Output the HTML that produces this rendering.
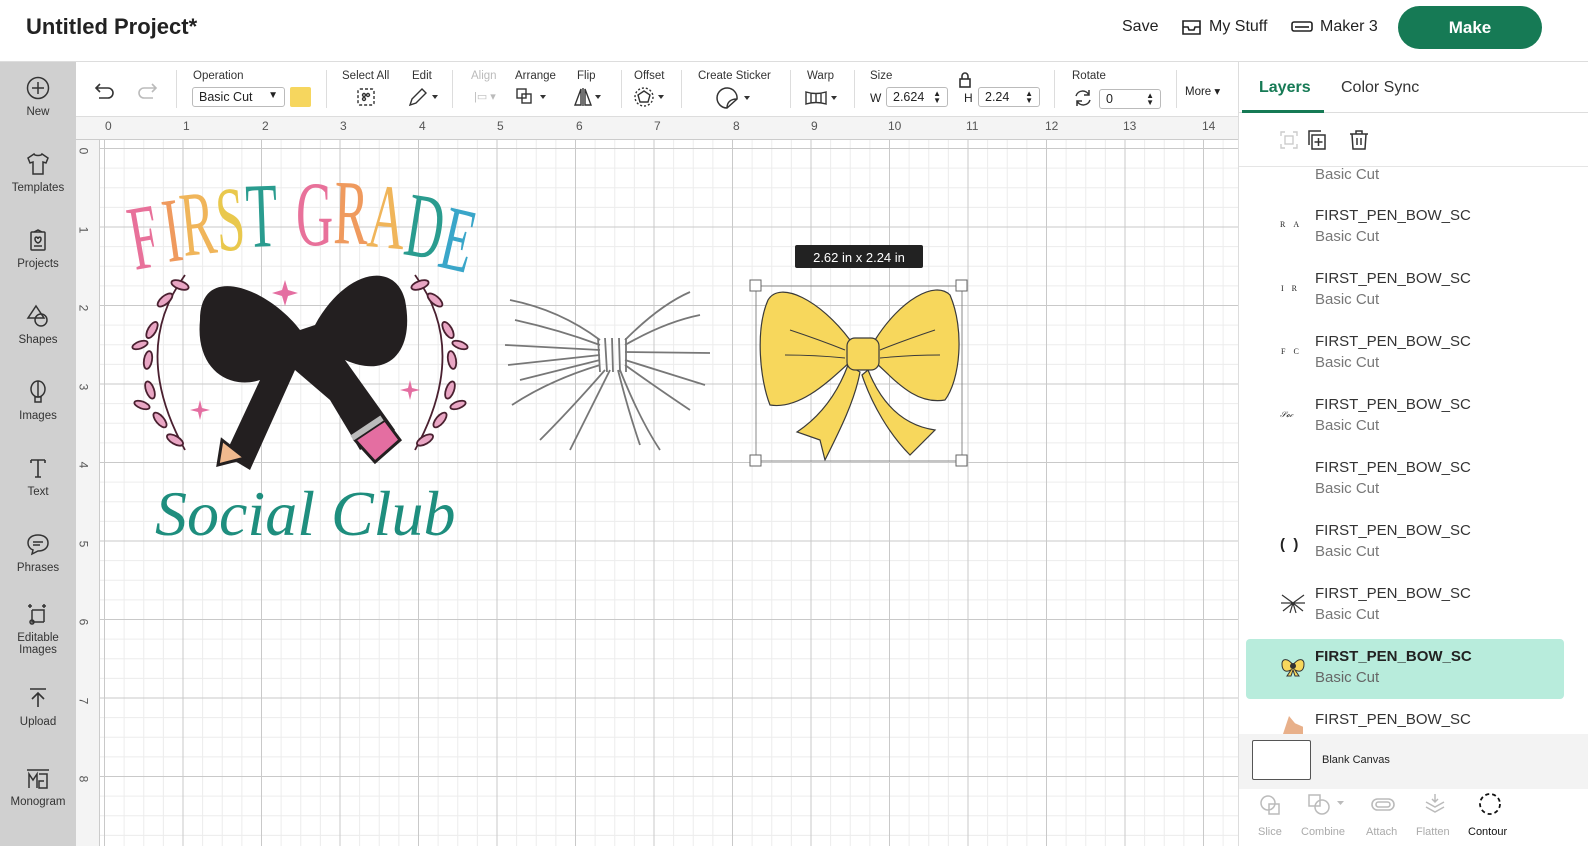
<!DOCTYPE html>
<html><head><meta charset="utf-8"><style>
*{margin:0;padding:0;box-sizing:border-box}
body{width:1588px;height:846px;overflow:hidden;font-family:"Liberation Sans",sans-serif;background:#fff;position:relative;color:#222}
.top{position:absolute;left:0;top:0;width:1588px;height:62px;background:#fff;border-bottom:1px solid #ddd}
.title{position:absolute;left:26px;top:14px;font-size:22px;font-weight:bold;color:#222}
.tr{position:absolute;top:18px;font-size:16px;color:#222}
.make{position:absolute;left:1398px;top:6px;width:144px;height:43px;border-radius:22px;background:#167a55;color:#fff;font-weight:bold;font-size:17px;text-align:center;line-height:43px}
.side{position:absolute;left:0;top:62px;width:76px;height:784px;background:#d0d0d0}
.si{position:absolute;left:0;width:76px;text-align:center;font-size:11.5px;color:#333}
.si svg{display:block;margin:0 auto 6px}
.tb{position:absolute;left:76px;top:62px;width:1162px;height:55px;background:#fff;border-bottom:1px solid #ddd}
.lab{position:absolute;top:8px;font-size:11.5px;color:#333}
.sep{position:absolute;top:8px;width:1px;height:38px;background:#ddd}
.inp{position:absolute;height:20px;border:1px solid #bbb;border-radius:3px;font-size:12.5px;padding:2px 6px;background:#fff}
.canvas{position:absolute;left:100px;top:140px;width:1138px;height:706px;background-color:#fff;
background-image:linear-gradient(to right,#c9c9c9 1px,transparent 1px),linear-gradient(to bottom,#c9c9c9 1px,transparent 1px),linear-gradient(to right,#ececec 1px,transparent 1px),linear-gradient(to bottom,#ececec 1px,transparent 1px);
background-size:78.5px 78.5px,78.5px 78.5px,19.625px 19.625px,19.625px 19.625px;background-position:4px 8px,4px 8px,4px 8px,4px 8px}
.rt{position:absolute;left:76px;top:117px;width:1162px;height:23px;background:#f4f4f4;border-bottom:1px solid #ccc}
.rl{position:absolute;left:76px;top:140px;width:24px;height:706px;background:#f4f4f4;border-right:1px solid #ccc}
.rt span{position:absolute;top:2px;font-size:12px;color:#555}
.rl span{position:absolute;left:4px;font-size:12px;color:#555;transform:rotate(90deg)}
.panel{position:absolute;left:1238px;top:62px;width:350px;height:784px;background:#fff;border-left:1px solid #ddd}
.ly{position:absolute;left:1315px;font-size:15px;color:#333}
.ly b{font-weight:normal;display:block}
.ly i{font-style:normal;color:#777;display:block;margin-top:4px}
.bt{position:absolute;top:826px;font-size:11px;color:#aaa}
</style></head><body>
<div class="top">
<div class="title">Untitled Project*</div>
<div class="tr" style="left:1122px">Save</div>
<svg style="position:absolute;left:1181px;top:18px" width="21" height="18" viewBox="0 0 21 18" fill="none" stroke="#222" stroke-width="1.6"><path d="M2 3h17v13H2z M2 9h5l1 3h5l1-3h5"/></svg>
<div class="tr" style="left:1209px">My Stuff</div>
<svg style="position:absolute;left:1291px;top:20px" width="22" height="14" viewBox="0 0 22 14" fill="none" stroke="#222" stroke-width="1.6"><rect x="1" y="2" width="20" height="9" rx="2"/><path d="M4 7h14"/></svg>
<div class="tr" style="left:1320px">Maker 3</div>
<div class="make">Make</div>
</div>

<div class="side">
<div class="si" style="top:14px"><svg width="24" height="24" viewBox="0 0 24 24" fill="none" stroke="#333" stroke-width="1.5"><circle cx="12" cy="12" r="10.5"/><path d="M12 6v12M6 12h12"/></svg>New</div>
<div class="si" style="top:90px"><svg width="24" height="24" viewBox="0 0 24 24" fill="none" stroke="#333" stroke-width="1.5"><path d="M8 2l-6 4 2 5 3-1v12h10V10l3 1 2-5-6-4c-1 2-7 2-8 0z"/></svg>Templates</div>
<div class="si" style="top:166px"><svg width="24" height="24" viewBox="0 0 24 24" fill="none" stroke="#333" stroke-width="1.5"><rect x="5" y="4" width="14" height="18" rx="1"/><path d="M8 4l4-2 4 2M9 11c0-3 3-2 3 0 0-2 3-3 3 0s-3 4-3 4-3-1-3-4M8 18h8"/></svg>Projects</div>
<div class="si" style="top:242px"><svg width="24" height="24" viewBox="0 0 24 24" fill="none" stroke="#333" stroke-width="1.5"><path d="M10 2l8 12H2z"/><circle cx="15" cy="16" r="6"/></svg>Shapes</div>
<div class="si" style="top:318px"><svg width="24" height="24" viewBox="0 0 24 24" fill="none" stroke="#333" stroke-width="1.5"><ellipse cx="12" cy="9" rx="7" ry="8"/><path d="M12 1v16M9 17h6v5H9z"/></svg>Images</div>
<div class="si" style="top:394px"><svg width="24" height="24" viewBox="0 0 24 24" fill="none" stroke="#333" stroke-width="1.6"><path d="M5 4h14M12 4v17M9 21h6M5 4v3M19 4v3"/></svg>Text</div>
<div class="si" style="top:470px"><svg width="24" height="24" viewBox="0 0 24 24" fill="none" stroke="#333" stroke-width="1.5"><path d="M12 3c6 0 10 3 10 8s-4 8-10 8l-6 3 1-4C4 17 2 14 2 11c0-5 4-8 10-8zM7 10h10M7 13h7"/></svg>Phrases</div>
<div class="si" style="top:540px"><svg width="24" height="24" viewBox="0 0 24 24" fill="none" stroke="#333" stroke-width="1.5"><path d="M4 2v4M2 4h4M6 8l12 0 0 12M6 8v12h12M18 2v4M16 4h4"/><circle cx="6" cy="20" r="2"/></svg>Editable<br>Images</div>
<div class="si" style="top:624px"><svg width="24" height="24" viewBox="0 0 24 24" fill="none" stroke="#333" stroke-width="1.6"><path d="M4 3h16M12 21V7M6 13l6-6 6 6"/></svg>Upload</div>
<div class="si" style="top:704px"><svg width="26" height="24" viewBox="0 0 26 24" fill="none" stroke="#333" stroke-width="1.5"><path d="M2 4h22M4 22V8l4 6 4-6v14M14 8h8v14h-8v-7h5"/></svg>Monogram</div>
</div>

<div class="tb">
<svg style="position:absolute;left:18px;top:20px" width="22" height="18" viewBox="0 0 22 18" fill="none" stroke="#333" stroke-width="1.6"><path d="M6 2L2 6l4 4M2 6h12a5 5 0 010 10H5"/></svg>
<svg style="position:absolute;left:60px;top:20px" width="22" height="18" viewBox="0 0 22 18" fill="none" stroke="#bbb" stroke-width="1.6"><path d="M16 2l4 4-4 4M20 6H8a5 5 0 000 10h9"/></svg>
<div class="sep" style="left:100px"></div>
<div class="lab" style="left:117px">Operation</div>
<div class="inp" style="left:116px;top:25px;width:93px">Basic Cut <span style="float:right;font-size:10px">▼</span></div>
<div style="position:absolute;left:214px;top:25px;width:21px;height:20px;background:#f6d65e;border-radius:2px"></div>
<div class="sep" style="left:250px"></div>
<div class="lab" style="left:266px">Select All</div>
<svg style="position:absolute;left:280px;top:25px" width="20" height="20" viewBox="0 0 20 20" fill="none" stroke="#333" stroke-width="1.4" stroke-dasharray="3 2"><rect x="2" y="2" width="16" height="16" rx="2"/><circle cx="8" cy="8" r="1.5" stroke-dasharray="0"/><circle cx="12" cy="8" r="1.5" stroke-dasharray="0"/><circle cx="8" cy="12" r="1.5" stroke-dasharray="0"/></svg>
<div class="lab" style="left:336px">Edit</div>
<svg style="position:absolute;left:332px;top:25px" width="32" height="20" viewBox="0 0 32 20" fill="none" stroke="#333" stroke-width="1.4"><path d="M2 18l2-6L14 2l4 4L8 16z"/><path d="M24 8h6l-3 4z" fill="#333" stroke="none"/></svg>
<div class="sep" style="left:376px"></div>
<div class="lab" style="left:395px;color:#bbb">Align</div>
<div style="position:absolute;left:398px;top:28px;font-size:11px;color:#bbb">|▭ ▾</div>
<div class="lab" style="left:439px">Arrange</div>
<svg style="position:absolute;left:440px;top:26px" width="32" height="18" viewBox="0 0 32 18" fill="none" stroke="#333" stroke-width="1.4"><rect x="1" y="1" width="9" height="9"/><rect x="6" y="6" width="9" height="9"/><path d="M24 7h6l-3 4z" fill="#333" stroke="none"/></svg>
<div class="lab" style="left:501px">Flip</div>
<svg style="position:absolute;left:497px;top:25px" width="32" height="20" viewBox="0 0 32 20" fill="none" stroke="#333" stroke-width="1.4"><path d="M8 2L2 18h6zM12 2l6 16h-6zM10 1v18"/><path d="M22 8h6l-3 4z" fill="#333" stroke="none"/></svg>
<div class="sep" style="left:545px"></div>
<div class="lab" style="left:558px">Offset</div>
<svg style="position:absolute;left:558px;top:25px" width="32" height="20" viewBox="0 0 32 20" fill="none" stroke="#333" stroke-width="1.4"><path d="M10 4l6 4-2 7H6L4 8z"/><circle cx="10" cy="10" r="9" stroke-dasharray="2 2"/><path d="M24 8h6l-3 4z" fill="#333" stroke="none"/></svg>
<div class="sep" style="left:605px"></div>
<div class="lab" style="left:622px">Create Sticker</div>
<svg style="position:absolute;left:640px;top:25px" width="40" height="22" viewBox="0 0 40 22" fill="none" stroke="#333" stroke-width="1.5"><path d="M21 12A10 10 0 1 0 11 21zM21 12c-6 0-10 3-10 9"/><path d="M28 9h6l-3 4z" fill="#333" stroke="none"/></svg>
<div class="sep" style="left:714px"></div>
<div class="lab" style="left:731px">Warp</div>
<svg style="position:absolute;left:728px;top:27px" width="36" height="18" viewBox="0 0 36 18" fill="none" stroke="#333" stroke-width="1.4"><path d="M2 3q10 3 20 0v12q-10-3-20 0zM7 4v10M12 4v10M17 4v10"/><path d="M27 7h6l-3 4z" fill="#333" stroke="none"/></svg>
<div class="sep" style="left:778px"></div>
<div class="lab" style="left:794px">Size</div>
<svg style="position:absolute;left:882px;top:10px" width="14" height="16" viewBox="0 0 14 16" fill="none" stroke="#333" stroke-width="1.6"><rect x="2" y="7" width="10" height="8"/><path d="M4 7V4a3 3 0 016 0v3"/></svg>
<div style="position:absolute;left:794px;top:29px;font-size:12px">W</div>
<div class="inp" style="left:810px;top:25px;width:62px">2.624<span style="float:right;font-size:8px;line-height:7px">▲<br>▼</span></div>
<div style="position:absolute;left:888px;top:29px;font-size:12px">H</div>
<div class="inp" style="left:902px;top:25px;width:62px">2.24<span style="float:right;font-size:8px;line-height:7px">▲<br>▼</span></div>
<div class="sep" style="left:978px"></div>
<div class="lab" style="left:996px">Rotate</div>
<svg style="position:absolute;left:997px;top:26px" width="20" height="20" viewBox="0 0 20 20" fill="none" stroke="#333" stroke-width="1.5"><path d="M16 7a7 7 0 00-13 1M4 13a7 7 0 0013-1M16 2v5h-5M4 18v-5h5"/></svg>
<div class="inp" style="left:1023px;top:27px;width:62px">0<span style="float:right;font-size:8px;line-height:7px">▲<br>▼</span></div>
<div class="sep" style="left:1100px"></div>
<div style="position:absolute;left:1109px;top:22px;font-size:11.5px">More ▾</div>
</div>

<div class="rt">
<span style="left:29px">0</span><span style="left:107px">1</span><span style="left:186px">2</span><span style="left:264px">3</span><span style="left:343px">4</span><span style="left:421px">5</span><span style="left:500px">6</span><span style="left:578px">7</span><span style="left:657px">8</span><span style="left:735px">9</span><span style="left:812px">10</span><span style="left:890px">11</span><span style="left:969px">12</span><span style="left:1047px">13</span><span style="left:1126px">14</span>
</div>
<div class="rl">
<span style="top:4px">0</span><span style="top:83px">1</span><span style="top:161px">2</span><span style="top:240px">3</span><span style="top:318px">4</span><span style="top:397px">5</span><span style="top:475px">6</span><span style="top:554px">7</span><span style="top:632px">8</span>
</div>
<div class="canvas"></div>

<svg style="position:absolute;left:100px;top:140px" width="1138" height="706" viewBox="100 140 1138 706">
<!-- wreaths -->
<g stroke="#4a2030" stroke-width="1.8" fill="#e9a6c4">
<path d="M185 275 Q130 350 185 450" fill="none"/>
<path d="M415 275 Q470 350 415 450" fill="none"/>
<g><ellipse cx="165" cy="300" rx="9" ry="4" transform="rotate(-40 165 300)"/><ellipse cx="152" cy="330" rx="9" ry="4" transform="rotate(-60 152 330)"/><ellipse cx="148" cy="360" rx="9" ry="4" transform="rotate(-80 148 360)"/><ellipse cx="150" cy="390" rx="9" ry="4" transform="rotate(70 150 390)"/><ellipse cx="160" cy="420" rx="9" ry="4" transform="rotate(50 160 420)"/><ellipse cx="180" cy="285" rx="9" ry="4" transform="rotate(20 180 285)"/><ellipse cx="175" cy="440" rx="9" ry="4" transform="rotate(30 175 440)"/><ellipse cx="140" cy="345" rx="8" ry="3.5" transform="rotate(-20 140 345)"/><ellipse cx="142" cy="405" rx="8" ry="3.5" transform="rotate(20 142 405)"/></g>
<g><ellipse cx="435" cy="300" rx="9" ry="4" transform="rotate(40 435 300)"/><ellipse cx="448" cy="330" rx="9" ry="4" transform="rotate(60 448 330)"/><ellipse cx="452" cy="360" rx="9" ry="4" transform="rotate(80 452 360)"/><ellipse cx="450" cy="390" rx="9" ry="4" transform="rotate(-70 450 390)"/><ellipse cx="440" cy="420" rx="9" ry="4" transform="rotate(-50 440 420)"/><ellipse cx="420" cy="285" rx="9" ry="4" transform="rotate(-20 420 285)"/><ellipse cx="425" cy="440" rx="9" ry="4" transform="rotate(-30 425 440)"/><ellipse cx="460" cy="345" rx="8" ry="3.5" transform="rotate(20 460 345)"/><ellipse cx="458" cy="405" rx="8" ry="3.5" transform="rotate(-20 458 405)"/></g>
</g>
<!-- black bow -->
<path d="M300 330 C270 290 200 260 200 320 C195 370 230 390 260 380 L225 455 L250 470 L295 370 L330 400 L360 450 L395 430 L345 360 C390 380 415 350 405 300 C395 260 345 270 315 325 Z" fill="#231f20"/>
<path d="M222 440 L218 465 L245 458 Z" fill="#f0b98e" stroke="#231f20" stroke-width="3"/>
<path d="M355 440 L385 420 L400 440 L375 462 Z" fill="#e46ea1" stroke="#231f20" stroke-width="3"/>
<path d="M352 438 L382 418" stroke="#bbb" stroke-width="6"/>
<g fill="#e46ea1"><path d="M285 280l3 10 10 3-10 3-3 10-3-10-10-3 10-3z"/><path d="M410 380l2 8 8 2-8 2-2 8-2-8-8-2 8-2z"/><path d="M200 400l2 8 8 2-8 2-2 8-2-8-8-2 8-2z"/></g>
<g font-family="Liberation Serif,serif" font-size="92">
<text transform="translate(135 270) rotate(-10) scale(0.56 1)" fill="#e8719a">F</text>
<text transform="translate(168 262) rotate(-8) scale(0.56 1)" fill="#ef9a5e">I</text>
<text transform="translate(184 256) rotate(-6) scale(0.56 1)" fill="#f0b55a">R</text>
<text transform="translate(218 251) rotate(-4) scale(0.56 1)" fill="#e9c84d">S</text>
<text transform="translate(247 247) rotate(-2) scale(0.56 1)" fill="#2a9c8f">T</text>
<text transform="translate(296 245) rotate(0) scale(0.56 1)" fill="#e8719a">G</text>
<text transform="translate(333 243) rotate(2) scale(0.56 1)" fill="#ef9a5e">R</text>
<text transform="translate(366 246) rotate(5) scale(0.56 1)" fill="#f0b55a">A</text>
<text transform="translate(402 254) rotate(9) scale(0.56 1)" fill="#2a9c8f">D</text>
<text transform="translate(436 266) rotate(13) scale(0.56 1)" fill="#3aa6c9">E</text>
</g>
<text x="155" y="535" font-family="Liberation Serif,serif" font-style="italic" font-size="64" fill="#1e8e7e">Social Club</text>
<!-- gray line bow -->
<g stroke="#777" stroke-width="1.8" fill="none">
<path d="M600 340 Q560 310 510 300 M600 345 Q560 330 515 320 M600 350 L505 345 M600 355 L508 365 M600 365 Q550 380 512 405 M605 370 Q570 410 540 440 M610 370 Q585 420 570 450 M600 360 L520 380"/>
<path d="M625 340 Q660 305 690 292 M625 345 Q665 322 700 315 M625 352 L710 353 M625 360 L705 385 M620 370 Q640 420 660 450 M618 370 Q628 410 640 445 M625 365 Q660 390 690 410"/>
<path d="M598 338 L600 372 M605 338 L607 372 M612 338 L613 372 M619 338 L620 372 M626 338 L626 372"/>
</g>
<!-- yellow bow -->
<g stroke="#3a3a3a" stroke-width="1.2">
<path d="M850 340 C820 300 780 280 768 300 C755 330 760 380 770 405 C800 410 830 380 850 362 Z" fill="#f7d75c"/>
<path d="M875 340 C900 300 935 280 950 295 C965 330 960 380 945 400 C915 405 895 380 875 362 Z" fill="#f7d75c"/>
<path d="M848 365 C835 400 815 420 797 432 L820 440 L825 460 C840 430 855 400 860 372 Z" fill="#f7d75c"/>
<path d="M868 370 C880 400 900 425 935 430 L910 455 C890 435 872 405 862 375 Z" fill="#f7d75c"/>
<rect x="847" y="338" width="32" height="32" rx="8" fill="#f7d75c"/>
<path d="M790 330 Q820 340 845 350 M785 355 Q815 355 845 358 M935 330 Q905 340 880 350 M940 355 Q910 355 880 358" fill="none" stroke-width="1"/>
</g>
<rect x="756" y="286" width="206" height="175" fill="none" stroke="#888" stroke-width="1"/>
<g fill="#fff" stroke="#666"><rect x="750" y="280" width="11" height="11"/><rect x="956" y="280" width="11" height="11"/><rect x="750" y="455" width="11" height="11"/><rect x="956" y="455" width="11" height="11"/></g>
<rect x="795" y="245" width="128" height="23" rx="2" fill="#222"/>
<text x="859" y="262" text-anchor="middle" font-size="13" fill="#fff" font-family="Liberation Sans,sans-serif">2.62  in x 2.24  in</text>
</svg>

<div class="panel">
<div style="position:absolute;left:20px;top:17px;font-size:16px;font-weight:bold;color:#167a55">Layers</div>
<div style="position:absolute;left:102px;top:17px;font-size:16px;color:#333">Color Sync</div>
<div style="position:absolute;left:0;top:50px;width:350px;height:1px;background:#ddd"></div>
<div style="position:absolute;left:3px;top:48px;width:82px;height:3px;background:#167a55"></div>
<svg style="position:absolute;left:40px;top:68px" width="20" height="20" viewBox="0 0 20 20" fill="none" stroke="#ccc" stroke-width="1.4"><path d="M2 6V2h4M14 2h4v4M18 14v4h-4M6 18H2v-4"/><rect x="6" y="6" width="8" height="8"/></svg>
<svg style="position:absolute;left:66px;top:67px" width="22" height="22" viewBox="0 0 22 22" fill="none" stroke="#333" stroke-width="1.5"><path d="M4 16V2h12"/><rect x="7" y="6" width="13" height="14"/><path d="M13.5 9v8M9.5 13h8"/></svg>
<svg style="position:absolute;left:109px;top:67px" width="22" height="22" viewBox="0 0 22 22" fill="none" stroke="#333" stroke-width="1.5"><path d="M2 5h18M8 5V2h6v3M4 5l1 15h12l1-15M9 9v7M13 9v7"/></svg>
<div style="position:absolute;left:0;top:104px;width:350px;height:1px;background:#e5e5e5"></div>
<div style="position:absolute;left:7px;top:577px;width:318px;height:60px;background:#b8ecdc;border-radius:4px"></div>
<div style="position:absolute;left:0;top:672px;width:350px;height:55px;background:#f3f3f3"></div>
<div style="position:absolute;left:13px;top:678px;width:59px;height:40px;background:#fff;border:1px solid #555;border-radius:2px"></div>
<div style="position:absolute;left:83px;top:692px;font-size:11px;color:#222">Blank Canvas</div>
</div>
<div class="ly" style="top:166px"><i style="margin:0">Basic Cut</i></div>
<div class="ly" style="top:207px"><b>FIRST_PEN_BOW_SC</b><i>Basic Cut</i></div>
<div class="ly" style="top:270px"><b>FIRST_PEN_BOW_SC</b><i>Basic Cut</i></div>
<div class="ly" style="top:333px"><b>FIRST_PEN_BOW_SC</b><i>Basic Cut</i></div>
<div class="ly" style="top:396px"><b>FIRST_PEN_BOW_SC</b><i>Basic Cut</i></div>
<div class="ly" style="top:459px"><b>FIRST_PEN_BOW_SC</b><i>Basic Cut</i></div>
<div class="ly" style="top:522px"><b>FIRST_PEN_BOW_SC</b><i>Basic Cut</i></div>
<div class="ly" style="top:585px"><b>FIRST_PEN_BOW_SC</b><i>Basic Cut</i></div>
<div class="ly" style="top:648px;color:#222"><b style="font-weight:bold">FIRST_PEN_BOW_SC</b><i style="color:#666">Basic Cut</i></div>
<div class="ly" style="top:711px"><b>FIRST_PEN_BOW_SC</b></div>
<div style="position:absolute;left:1280px;top:220px;font-size:8px;font-family:'Liberation Serif'">R&nbsp;&nbsp;&nbsp;&nbsp;A</div>
<div style="position:absolute;left:1281px;top:284px;font-size:8px;font-family:'Liberation Serif'">I&nbsp;&nbsp;&nbsp;&nbsp;R</div>
<div style="position:absolute;left:1281px;top:347px;font-size:8px;font-family:'Liberation Serif'">F&nbsp;&nbsp;&nbsp;&nbsp;C</div>
<div style="position:absolute;left:1280px;top:410px;font-size:8px;font-style:italic">𝒮𝓸𝒸</div>
<div style="position:absolute;left:1280px;top:536px;font-size:15px;font-weight:bold">(&nbsp;&nbsp;)</div>
<svg style="position:absolute;left:1280px;top:592px" width="26" height="22" viewBox="0 0 26 22" stroke="#333" stroke-width="1.2"><path d="M13 11L2 3M13 11L1 11M13 11L3 19M13 11L24 3M13 11L25 11M13 11L23 19M13 11L10 21M13 11L16 21"/></svg>
<svg style="position:absolute;left:1280px;top:656px" width="26" height="22" viewBox="0 0 26 22"><path d="M13 9C8 2 2 2 2 8s3 9 9 6L7 20h4l2-6 2 6h4l-4-6c6 3 9 0 9-6s-6-6-11 1z" fill="#f7d75c" stroke="#333"/><circle cx="13" cy="10" r="3" fill="#333"/></svg>
<div style="position:absolute;left:1283px;top:716px;width:20px;height:18px;background:#e8b08a;clip-path:polygon(30% 0,60% 40%,100% 60%,100% 100%,0 100%)"></div>

<svg style="position:absolute;left:1259px;top:793px" width="24" height="24" viewBox="0 0 24 24" fill="none" stroke="#bbb" stroke-width="1.5"><circle cx="9" cy="10" r="7"/><rect x="10" y="11" width="10" height="10"/></svg>
<svg style="position:absolute;left:1307px;top:793px" width="40" height="24" viewBox="0 0 40 24" fill="none" stroke="#bbb" stroke-width="1.5"><rect x="2" y="2" width="11" height="11"/><circle cx="15" cy="14" r="7"/><path d="M30 8h7l-3.5 4z" fill="#bbb" stroke="none"/></svg>
<svg style="position:absolute;left:1370px;top:795px" width="26" height="20" viewBox="0 0 26 20" fill="none" stroke="#bbb" stroke-width="1.6"><rect x="2" y="4" width="22" height="11" rx="5.5"/><rect x="6" y="7" width="14" height="5" rx="2.5"/></svg>
<svg style="position:absolute;left:1423px;top:792px" width="24" height="24" viewBox="0 0 24 24" fill="none" stroke="#bbb" stroke-width="1.5"><path d="M12 2v8M9 7l3 3 3-3M3 10l9 5 9-5M3 15l9 5 9-5"/></svg>
<svg style="position:absolute;left:1478px;top:792px" width="24" height="24" viewBox="0 0 24 24" fill="none" stroke="#111" stroke-width="1.8" stroke-dasharray="4 3"><circle cx="12" cy="12" r="10"/></svg>
<div class="bt" style="left:1258px">Slice</div>
<div class="bt" style="left:1301px">Combine</div>
<div class="bt" style="left:1366px">Attach</div>
<div class="bt" style="left:1416px">Flatten</div>
<div class="bt" style="left:1468px;color:#111">Contour</div>
</body></html>
